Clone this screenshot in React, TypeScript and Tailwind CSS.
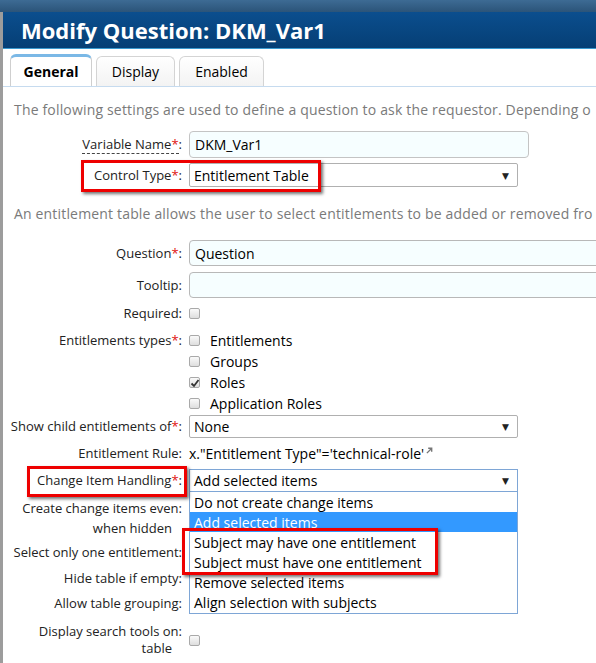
import React from 'react';

const font = { fontFamily: '"Open Sans", "DejaVu Sans", sans-serif' };

const Star = () => <span className="text-[#e01010]">*</span>;

const Checkbox: React.FC<{ checked?: boolean }> = ({ checked }) => (
  <span className="relative inline-block w-[11px] h-[11px] rounded-[2px] border border-[#a9a9a9] bg-gradient-to-b from-[#fafafa] to-[#dedede] shrink-0">
    {checked && (
      <svg viewBox="0 0 12 12" className="absolute -left-[1px] -top-[1px] w-[12px] h-[12px]">
        <path d="M2.5 6.5 L5 9 L9.5 3" fill="none" stroke="#333" strokeWidth="1.8" />
      </svg>
    )}
  </span>
);

const Arrow = () => (
  <span className="text-[9px] text-[#222] leading-none">▼</span>
);

const Row: React.FC<{ label: React.ReactNode; h: string; children?: React.ReactNode }> = ({ label, h, children }) => (
  <div className={`flex items-center ${h}`}>
    <div className="w-[182px] shrink-0 text-right text-[13px] text-[#222] leading-[17px]">{label}</div>
    <div className="ml-[7px] flex-1 flex items-center h-full relative">{children}</div>
  </div>
);

const options = [
  'Do not create change items',
  'Add selected items',
  'Subject may have one entitlement',
  'Subject must have one entitlement',
  'Remove selected items',
  'Align selection with subjects',
];

export default function App() {
  return (
    <div className="relative w-[596px] h-[663px] overflow-hidden bg-white" style={font}>
      {/* top strip */}
      <div className="h-[12px] bg-gradient-to-b from-[#3d6b94] to-[#2b5479]" />
      <div className="flex h-[651px]">
        <div className="w-[3px] bg-[#9c9c9c] shrink-0" />
        <div className="flex-1 flex flex-col min-w-0">
          <div className="h-[37px] bg-gradient-to-b from-[#0b4e8e] to-[#063f75] border-b border-[#3a9ad0] flex items-center pl-[18px]">
            <span className="text-white font-bold text-[22px] leading-none">Modify Question: DKM_Var1</span>
          </div>
          {/* tabs */}
          <div className="flex items-end h-[38px] pl-[7px] gap-[4px] border-b border-[#c6dbef]">
            <div className="w-[82px] h-[32px] rounded-t-[6px] border border-[#cfcfcf] border-b-0 border-t-[3px] border-t-[#7ab8e6] bg-white flex items-center justify-center text-[14px] font-bold text-black">
              General
            </div>
            <div className="w-[79px] h-[30px] rounded-t-[6px] border border-[#d4d4d4] border-b-0 bg-gradient-to-b from-white to-[#f3f3f3] flex items-center justify-center text-[14px] text-black">
              Display
            </div>
            <div className="w-[85px] h-[30px] rounded-t-[6px] border border-[#d4d4d4] border-b-0 bg-gradient-to-b from-white to-[#f3f3f3] flex items-center justify-center text-[14px] text-black">
              Enabled
            </div>
          </div>

          <div className="-ml-[3px] whitespace-nowrap">
            <div className="h-[44px] pl-[14px] flex items-center text-[14px] tracking-[0.17px] text-[#7a7a7a] overflow-hidden">
              The following settings are used to define a question to ask the requestor. Depending o
            </div>
            <Row h="h-[27px]" label={<><span className="border-b border-dashed border-[#444]">Variable Name<Star /></span>:</>}>
              <div className="w-[340px] h-full rounded-[4px] border border-[#c4c4c4] bg-[#f6feff] flex items-center pl-[5px] text-[14px] text-black">DKM_Var1</div>
            </Row>
            <div className="h-[5px]" />
            <Row h="h-[24px]" label={<>Control Type<Star />:</>}>
              <div className="w-[329px] h-full rounded-[2px] border border-[#b0b0b0] bg-white flex items-center justify-between pl-[4px] pr-[8px] text-[14px] text-black">
                <span>Entitlement Table</span>
                <Arrow />
              </div>
            </Row>
            <div className="h-[53px] pl-[14px] flex items-center text-[14px] tracking-[0.17px] text-[#7a7a7a] overflow-hidden">
              An entitlement table allows the user to select entitlements to be added or removed fro
            </div>
            <Row h="h-[26px]" label={<>Question<Star />:</>}>
              <div className="w-[420px] h-full rounded-l-[4px] border border-[#b8b8b8] bg-[#f6feff] flex items-center pl-[5px] text-[14px] text-black">Question</div>
            </Row>
            <div className="h-[6px]" />
            <Row h="h-[26px]" label="Tooltip:">
              <div className="w-[420px] h-full rounded-l-[4px] border border-[#b8b8b8] bg-[#f6feff]" />
            </Row>
            <div className="h-[5px]" />
            <Row h="h-[21px]" label="Required:">
              <Checkbox />
            </Row>
            <div className="h-[6px]" />
            <Row h="h-[21px]" label={<>Entitlements types<Star />:</>}>
              <Checkbox />
              <span className="ml-[10px] text-[14px] text-black">Entitlements</span>
            </Row>
            <Row h="h-[21px]" label="">
              <Checkbox />
              <span className="ml-[10px] text-[14px] text-black">Groups</span>
            </Row>
            <Row h="h-[21px]" label="">
              <Checkbox checked />
              <span className="ml-[10px] text-[14px] text-black">Roles</span>
            </Row>
            <Row h="h-[21px]" label="">
              <Checkbox />
              <span className="ml-[10px] text-[14px] text-black">Application Roles</span>
            </Row>
            <div className="h-[1px]" />
            <Row h="h-[23px]" label={<>Show child entitlements of<Star />:</>}>
              <div className="w-[329px] h-full rounded-[2px] border border-[#b0b0b0] bg-white flex items-center justify-between pl-[4px] pr-[8px] text-[14px] text-black">
                <span>None</span>
                <Arrow />
              </div>
            </Row>
            <Row h="h-[31px]" label="Entitlement Rule:">
              <span className="text-[14px] text-black">x."Entitlement Type"='technical-role'</span>
              <svg viewBox="0 0 8 8" className="w-[7px] h-[7px] ml-[2px] -mt-[6px]">
                <path d="M1 7 L6 2 M2.5 1.5 H6.5 V5.5" fill="none" stroke="#777" strokeWidth="1.6" />
              </svg>
            </Row>
            <Row h="h-[23px]" label={<>Change Item Handling<Star />:</>}>
              <div className="w-[329px] h-full border border-[#7ea6d6] bg-white flex items-center justify-between pl-[4px] pr-[8px] text-[14px] text-black">
                <span>Add selected items</span>
                <Arrow />
              </div>
              <div className="absolute left-0 top-[23px] z-10 w-[329px] border border-[#7ea6d6] border-t-0 bg-white pb-[1px] text-[14px] text-black">
                {options.map((o) => (
                  <div key={o} className={`h-[20px] pl-[4px] flex items-center ${o === 'Add selected items' ? 'bg-[#3399ff] text-white' : ''}`}>
                    {o}
                  </div>
                ))}
              </div>
            </Row>
            <div className="h-[6px]" />
            <Row h="h-[40px]" label={<div className="leading-[20px]">Create change items even:<br /><span className="pr-[10px]">when hidden</span></div>}>
              <span />
            </Row>
            <div className="h-[2px]" />
            <Row h="h-[25px]" label="Select only one entitlement:" />
            <Row h="h-[26px]" label="Hide table if empty:" />
            <Row h="h-[25px]" label="Allow table grouping:" />
            <div className="h-[6px]" />
            <Row h="h-[36px]" label={<div className="leading-[17px]">Display search tools on:<br /><span className="pr-[10px]">table</span></div>}>
              <Checkbox />
            </Row>
          </div>
        </div>
      </div>

      {/* highlight boxes */}
      <div className="absolute left-[81px] top-[160px] w-[240px] h-[32px] border-[3px] border-[#ee0000] shadow-[2px_2px_3px_rgba(0,0,0,0.55)] z-20" />
      <div className="absolute left-[27px] top-[466px] w-[160px] h-[31px] border-[3px] border-[#ee0000] shadow-[2px_2px_3px_rgba(0,0,0,0.55)] z-20" />
      <div className="absolute left-[182px] top-[528px] w-[256px] h-[47px] border-[3px] border-[#ee0000] shadow-[2px_2px_3px_rgba(0,0,0,0.55)] z-20" />
    </div>
  );
}
